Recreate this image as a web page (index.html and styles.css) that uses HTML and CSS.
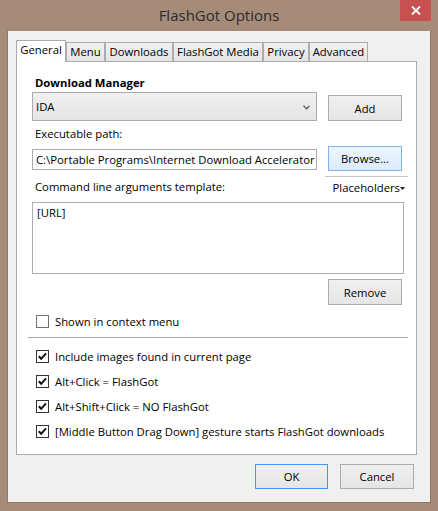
FILE: index.html
```html
<!DOCTYPE html>
<html>
<head>
<meta charset="utf-8">
<link rel="stylesheet" href="styles.css">
</head>
<body>
<div class="window">
  <div class="titlebar">
    <span class="title">FlashGot Options</span>
    <div class="close">
      <svg width="10" height="9" viewBox="0 0 10 9"><path d="M1 0.5 L9 8.5 M9 0.5 L1 8.5" stroke="#fff" stroke-width="1.8" fill="none"/></svg>
    </div>
  </div>
  <div class="client">
    <div class="tabs">
      <div class="tab selected t-general">General</div>
      <div class="tab t-menu">Menu</div>
      <div class="tab t-downloads">Downloads</div>
      <div class="tab t-media">FlashGot Media</div>
      <div class="tab t-privacy">Privacy</div>
      <div class="tab t-advanced">Advanced</div>
    </div>
    <div class="panel">
      <div class="label bold lbl-dm">Download Manager</div>
      <div class="row row1">
        <div class="select">
          <span class="select-text">IDA</span>
          <svg class="chev" width="7" height="5" viewBox="0 0 7 5"><path d="M0.5 0.8 L3.5 3.8 L6.5 0.8" stroke="#606060" stroke-width="1.3" fill="none"/></svg>
        </div>
        <div class="btn btn-push">Add</div>
      </div>
      <div class="label lbl-exe">Executable path:</div>
      <div class="row row2">
        <div class="input"><span class="input-text">C:\Portable Programs\Internet Download Accelerator</span></div>
        <div class="btn btn-push hover">Browse...</div>
      </div>
      <div class="row row3">
        <div class="label lbl-cmd">Command line arguments template:</div>
        <div class="placeholders">Placeholders<svg class="tri" width="5" height="3" viewBox="0 0 5 3"><path d="M0 0 L5 0 L2.5 3 Z" fill="#222"/></svg></div>
      </div>
      <div class="textarea">[URL]</div>
      <div class="row row-remove"><div class="btn btn-push">Remove</div></div>
      <div class="check-row first-check">
        <svg class="box" width="13" height="13" viewBox="0 0 13 13"><rect x="0.5" y="0.5" width="12" height="12" fill="#fff" stroke="#707070"/></svg>
        <span>Shown in context menu</span>
      </div>
      <div class="sep"></div>
      <div class="checks">
        <div class="check-row">
          <svg class="box" width="13" height="13" viewBox="0 0 13 13"><rect x="0.5" y="0.5" width="12" height="12" fill="#fff" stroke="#333"/><path d="M2.8 6.2 L5.2 8.8 L10 3.4" stroke="#111" stroke-width="2" fill="none"/></svg>
          <span>Include images found in current page</span>
        </div>
        <div class="check-row">
          <svg class="box" width="13" height="13" viewBox="0 0 13 13"><rect x="0.5" y="0.5" width="12" height="12" fill="#fff" stroke="#333"/><path d="M2.8 6.2 L5.2 8.8 L10 3.4" stroke="#111" stroke-width="2" fill="none"/></svg>
          <span>Alt+Click = FlashGot</span>
        </div>
        <div class="check-row">
          <svg class="box" width="13" height="13" viewBox="0 0 13 13"><rect x="0.5" y="0.5" width="12" height="12" fill="#fff" stroke="#333"/><path d="M2.8 6.2 L5.2 8.8 L10 3.4" stroke="#111" stroke-width="2" fill="none"/></svg>
          <span>Alt+Shift+Click = NO FlashGot</span>
        </div>
        <div class="check-row">
          <svg class="box" width="13" height="13" viewBox="0 0 13 13"><rect x="0.5" y="0.5" width="12" height="12" fill="#fff" stroke="#333"/><path d="M2.8 6.2 L5.2 8.8 L10 3.4" stroke="#111" stroke-width="2" fill="none"/></svg>
          <span>[Middle Button Drag Down] gesture starts FlashGot downloads</span>
        </div>
      </div>
    </div>
    <div class="footer">
      <div class="btn btn-ok default">OK</div>
      <div class="btn btn-cancel">Cancel</div>
    </div>
  </div>
</div>
</body>
</html>
```

FILE: styles.css
```css
* { box-sizing: border-box; }
html, body { margin: 0; padding: 0; }
body {
  width: 438px;
  height: 511px;
  overflow: hidden;
  background: #a68b79;
  font-family: "Open Sans", "Noto Sans", sans-serif;
  font-size: 11.3px;
  color: #000;
}
.window {
  width: 438px;
  height: 511px;
  display: flex;
  flex-direction: column;
  background: #a68b79;
}
.titlebar {
  height: 30px;
  position: relative;
  display: flex;
  align-items: center;
  justify-content: center;
}
.title {
  font-size: 15px;
  color: #2b2b2b;
  line-height: 20px;
}
.close {
  position: absolute;
  top: 0;
  right: 7px;
  width: 31px;
  height: 21px;
  background: #c75050;
  display: flex;
  align-items: center;
  justify-content: center;
}
.client {
  margin: 0 7px 8px 7px;
  height: 473px;
  border: 1px solid #8f7866;
  border-top-color: #a68b79;
  background: #f0f0f0;
  padding: 9px 13px 0 8px;
  display: flex;
  flex-direction: column;
}
.tabs {
  height: 21px;
  display: flex;
  align-items: flex-end;
}
.tab {
  height: 19px;
  border: 1px solid #acacac;
  border-bottom: none;
  background: linear-gradient(#f0f0f0, #e5e5e5);
  display: flex;
  align-items: center;
  justify-content: center;
  line-height: 16px;
  white-space: nowrap;
}
.tab.selected {
  height: 22px;
  margin-bottom: -1px;
  background: #fff;
  position: relative;
  z-index: 1;
  padding-bottom: 3px;
}
.t-general { width: 50px; }
.t-menu { width: 39px; }
.t-downloads { width: 68px; }
.t-media { width: 90px; }
.t-privacy { width: 46px; }
.t-advanced { width: 59px; }
.panel {
  height: 394px;
  background: #fff;
  border: 1px solid #acacac;
  padding: 13px 12px 0 15px;
  display: flex;
  flex-direction: column;
}
.label {
  height: 16px;
  line-height: 16px;
  padding-left: 3px;
  white-space: nowrap;
}
.bold { font-weight: bold; }
.row { display: flex; }
.row1 {
  margin-top: 1px;
  height: 29px;
  align-items: flex-end;
}
.select {
  width: 285px;
  height: 29px;
  border: 1px solid #acacac;
  background: linear-gradient(#f0f0f0, #e5e5e5);
  display: flex;
  align-items: center;
  padding: 0 6px 0 2px;
}
.select-text { flex: 1; padding-left: 1px; }
.chev { margin-top: 1px; }
.btn {
  height: 26px;
  border: 1px solid #acacac;
  background: linear-gradient(#f0f0f0, #e5e5e5);
  display: flex;
  align-items: center;
  justify-content: center;
  white-space: nowrap;
}
.btn-push {
  width: 74px;
  margin-left: auto;
  margin-right: 2px;
}
.lbl-exe { margin-top: 5px; }
.row2 {
  margin-top: 4px;
  height: 25px;
  align-items: flex-start;
}
.row2 .btn { height: 25px; }
.input {
  width: 285px;
  height: 21px;
  margin-top: 3px;
  border: 1px solid #abadb3;
  background: #fff;
  line-height: 19px;
  padding-left: 3px;
  white-space: nowrap;
  overflow: hidden;
}
.input-text { display: block; overflow: hidden; }
.btn.hover {
  border-color: #7eb4ea;
  background: linear-gradient(#ecf4fc, #dcecfc);
}
.row3 {
  margin-top: 5px;
  height: 24px;
  align-items: flex-start;
  justify-content: space-between;
}
.lbl-cmd { margin-top: 3px; }
.placeholders {
  width: 83px;
  height: 24px;
  margin-right: -4px;
  border-top: 1px solid #c6c6c6;
  display: flex;
  align-items: center;
  justify-content: flex-end;
  padding-right: 3px;
  padding-bottom: 2px;
  line-height: 16px;
  white-space: nowrap;
}
.tri { margin-top: 2px; }
.textarea {
  margin-top: 2px;
  height: 72px;
  border: 1px solid #abadb3;
  padding: 2px 4px;
  line-height: 16px;
}
.row-remove { margin-top: 5px; height: 26px; }
.check-row {
  display: flex;
  align-items: center;
  height: 25px;
  padding-left: 4px;
  white-space: nowrap;
}
.check-row .box { flex: none; margin-right: 6px; }
.first-check { margin-top: -2px; height: 31px; padding-top: 5px; }
.sep {
  margin: 3px -4px 0 -4px;
  height: 1px;
  background: #a9a9a9;
}
.checks {
  margin-top: 6px;
  display: flex;
  flex-direction: column;
}
.footer {
  margin-top: 9px;
  display: flex;
  justify-content: flex-end;
  gap: 12px;
  padding-right: 3px;
}
.footer .btn { height: 25px; }
.btn-ok { width: 73px; }
.btn-cancel { width: 74px; }
.btn.default { border-color: #3c98f0; }
```
